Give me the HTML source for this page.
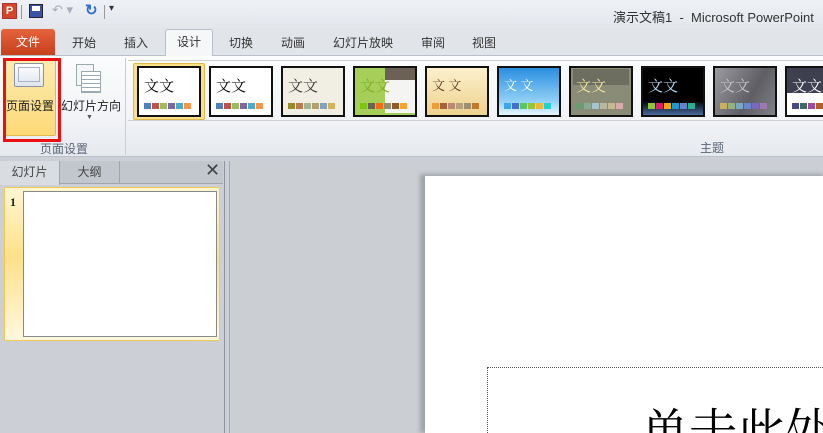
<!DOCTYPE html><html style="width:823px;height:433px;overflow:hidden"><head><meta charset="utf-8"><style>
*{margin:0;padding:0;box-sizing:border-box}
body{width:823px;height:433px;overflow:hidden;position:relative;background:#ccd0d6;font-family:"Liberation Sans","Noto Sans CJK SC",sans-serif;font-size:12px;color:#333}
.a{position:absolute}
.t{position:absolute;width:64px;height:51px;border:2px solid #111;overflow:hidden}
.t b{position:absolute;left:5px;top:7px;font-weight:normal;font-size:15px;font-family:"Noto Serif CJK SC",serif}
.sw{position:absolute;left:5px;top:35px;display:flex;gap:1px}
.sw i{display:block;width:7px;height:6px}
.tab{position:absolute;top:34px;font-size:12px;color:#333}
</style></head><body>
<div class="a" style="left:0;top:0;width:823px;height:28px;background:linear-gradient(#eef1f5,#e3e7ec)"></div>
<div class="a" style="left:2px;top:3px;width:15px;height:16px;background:#d24726;border:1px solid #a33;color:#fff;font-weight:bold;font-size:11px;text-align:center;line-height:14px">P</div>
<div class="a" style="left:21px;top:5px;width:1px;height:14px;background:#999"></div>
<div class="a" style="left:29px;top:4px;width:14px;height:14px;background:#3a52a6;border:1px solid #223"><div style="margin:1px 2px;height:5px;background:#fff"></div></div>
<div class="a" style="left:52px;top:2px;color:#aab;font-size:13px">↶ ▾</div>
<div class="a" style="left:85px;top:1px;color:#2e6fd0;font-size:15px;font-weight:bold">↻</div>
<div class="a" style="left:104px;top:5px;width:1px;height:14px;background:#999"></div>
<div class="a" style="left:109px;top:3px;font-size:10px">▾</div>
<div class="a" style="left:613px;top:7px;font-size:13px;color:#333;white-space:nowrap">演示文稿1&nbsp; - &nbsp;Microsoft PowerPoint</div>
<div class="a" style="left:0;top:28px;width:823px;height:28px;background:#e1e5ea;border-bottom:1px solid #b9c0c9"></div>
<div class="a" style="left:1px;top:29px;width:54px;height:26px;background:linear-gradient(#e5633c,#c7401c);border-radius:3px 3px 0 0;color:#fff;text-align:center;line-height:26px;font-size:12px">文件</div>
<div class="tab" style="left:72px">开始</div><div class="tab" style="left:124px">插入</div>
<div class="a" style="left:165px;top:29px;width:48px;height:28px;background:#f6f7f9;border:1px solid #b9c0c9;border-bottom:none;border-radius:3px 3px 0 0;text-align:center;line-height:25px">设计</div>
<div class="tab" style="left:229px">切换</div><div class="tab" style="left:281px">动画</div><div class="tab" style="left:333px">幻灯片放映</div><div class="tab" style="left:421px">审阅</div><div class="tab" style="left:472px">视图</div>
<div class="a" style="left:0;top:56px;width:823px;height:101px;background:linear-gradient(#fbfcfd,#f2f4f7 60%,#e6e9ee);border-bottom:1px solid #b9c0c9"></div>
<div class="a" style="left:125px;top:58px;width:1px;height:97px;background:#c9ced6"></div>
<div class="a" style="left:128px;top:60px;width:695px;height:1px;background:#d0d0d0"></div>
<div class="a" style="left:128px;top:120px;width:695px;height:1px;background:#d0d0d0"></div>
<div class="a" style="left:5px;top:60px;width:51px;height:76px;background:linear-gradient(#fdebb0,#fcd977);border:1px solid #e0b84c;border-radius:2px"></div>
<div class="a" style="left:14px;top:63px;width:30px;height:24px;border:1px solid #8a93a6;background:linear-gradient(#fff,#dfe4ee);border-radius:2px"><div style="margin:3px;height:15px;border:1px solid #aab3c4"></div></div>
<div class="a" style="left:6px;top:97px;font-size:12px;color:#222">页面设置</div>
<div class="a" style="left:3px;top:58px;width:58px;height:84px;border:3px solid #e81010"></div>
<div class="a" style="left:76px;top:64px;width:18px;height:22px;border:1px solid #9aa;background:#f4f6f8"></div>
<div class="a" style="left:81px;top:71px;width:20px;height:22px;border:1px solid #9aa;background:repeating-linear-gradient(#fff 0 3px,#9ab 3px 4px)"></div>
<div class="a" style="left:61px;top:97px;font-size:12px;color:#222">幻灯片方向</div>
<div class="a" style="left:86px;top:114px;font-size:7px;color:#555">▼</div>
<div class="a" style="left:40px;top:140px;color:#5a6576;font-size:12px">页面设置</div>
<div class="a" style="left:700px;top:139px;color:#5a6576;font-size:12px">主题</div>
<div class="a" style="left:133px;top:63px;width:72px;height:57px;background:#fbe08a;border:1px solid #e0b84c;border-radius:2px"></div>
<div class="t" style="left:137px;top:66px;background:#fff"><b style="color:#000">文文</b><div class="sw"><i style="background:#4f81bd"></i><i style="background:#c0504d"></i><i style="background:#9bbb59"></i><i style="background:#8064a2"></i><i style="background:#4bacc6"></i><i style="background:#f79646"></i></div></div>
<div class="t" style="left:209px;top:66px;background:#fff"><b style="color:#000">文文</b><div class="sw"><i style="background:#4f81bd"></i><i style="background:#c0504d"></i><i style="background:#9bbb59"></i><i style="background:#8064a2"></i><i style="background:#4bacc6"></i><i style="background:#f79646"></i></div></div>
<div class="t" style="left:281px;top:66px;background:#f1efe4"><b style="color:#333">文文</b><div class="sw"><i style="background:#958b28"></i><i style="background:#c0794d"></i><i style="background:#a3b395"></i><i style="background:#b5a06b"></i><i style="background:#7fa3c0"></i><i style="background:#d7b158"></i></div></div>
<div class="t" style="left:353px;top:66px;background:#a6cf5a"><div class="a" style="left:30px;top:0;width:30px;height:12px;background:#6b6155"></div><div class="a" style="left:30px;top:12px;width:30px;height:33px;background:#f4f4f2"></div><b style="color:#7bab22">文文</b><div class="sw"><i style="background:#7ac70f"></i><i style="background:#6b6155"></i><i style="background:#f26f10"></i><i style="background:#938f6d"></i><i style="background:#8d5b2e"></i><i style="background:#f6a330"></i></div></div>
<div class="t" style="left:425px;top:66px;background:linear-gradient(#fcf0cc,#eed28e)"><b style="color:#5a3a20;font-size:13px">文 文</b><div class="sw"><i style="background:#e8a035"></i><i style="background:#a4623a"></i><i style="background:#b98a74"></i><i style="background:#b8a078"></i><i style="background:#9c9070"></i><i style="background:#c0782a"></i></div></div>
<div class="t" style="left:497px;top:66px;background:linear-gradient(#2a8ee0,#8fd0f5 70%,#e8f6ff)"><b style="color:#fff;font-size:13px">文 文</b><div class="sw"><i style="background:#3aa6ec"></i><i style="background:#4470c8"></i><i style="background:#5bc466"></i><i style="background:#9bc23c"></i><i style="background:#f0b638"></i><i style="background:#20d2d8"></i></div></div>
<div class="t" style="left:569px;top:66px;background:#8a8c78"><div class="a" style="left:2px;top:1px;width:56px;height:16px;background:#6e6e60"></div><b style="color:#f3e8a0">文文</b><div class="sw"><i style="background:#6a9a70"></i><i style="background:#8aaa90"></i><i style="background:#a6c4d0"></i><i style="background:#b7b8a0"></i><i style="background:#c6b890"></i><i style="background:#d8aaa8"></i></div></div>
<div class="t" style="left:641px;top:66px;background:linear-gradient(#000 70%,#4a6aa0)"><b style="color:#bfe4ff">文文</b><div class="sw"><i style="background:#8ac83a"></i><i style="background:#d8206e"></i><i style="background:#f0a818"></i><i style="background:#1a9ad0"></i><i style="background:#6a82c8"></i><i style="background:#2ab090"></i></div></div>
<div class="t" style="left:713px;top:66px;background:linear-gradient(120deg,#9a9aa0,#5e5e64 60%,#808088)"><b style="color:#c8c8cc">文文</b><div class="sw"><i style="background:#c8b060"></i><i style="background:#98b080"></i><i style="background:#7aa8c0"></i><i style="background:#6a88c8"></i><i style="background:#7a68b8"></i><i style="background:#9a7ab0"></i></div></div>
<div class="t" style="left:785px;top:66px;background:#fff"><div class="a" style="left:0;top:0;width:64px;height:25px;background:#3e4050"></div><b style="color:#fff">文文</b><div class="sw"><i style="background:#4a4a80"></i><i style="background:#3a6a6a"></i><i style="background:#a04aa0"></i><i style="background:#b0602a"></i><i style="background:#8a5a3a"></i></div></div>
<div class="a" style="left:0;top:158px;width:225px;height:275px;background:#ccd0d6"></div>
<div class="a" style="left:0;top:161px;width:223px;height:23px;background:#c2c7ce;border-bottom:1px solid #9ea5ae"></div>
<div class="a" style="left:0;top:161px;width:60px;height:24px;background:#d9dde2;border-right:1px solid #9ea5ae;text-align:center;line-height:22px;color:#444">幻灯片</div>
<div class="a" style="left:60px;top:161px;width:60px;height:23px;border-right:1px solid #9ea5ae;text-align:center;line-height:22px;color:#444">大纲</div>
<div class="a" style="left:205px;top:160px;font-size:18px;color:#444">✕</div>
<div class="a" style="left:4px;top:187px;width:216px;height:154px;border:1px solid #f1c94f;border-radius:2px;background:linear-gradient(#fff6d2,#fde089 45%,#fff8df)"></div>
<div class="a" style="left:10px;top:195px;font-weight:bold;font-size:12px;color:#222;font-family:'Liberation Serif',serif">1</div>
<div class="a" style="left:23px;top:191px;width:194px;height:146px;background:#fff;border:1px solid #888"></div>
<div class="a" style="left:224px;top:161px;width:1px;height:272px;background:#8e959e"></div>
<div class="a" style="left:229px;top:161px;width:1px;height:272px;background:#a2a8b0"></div>
<div class="a" style="left:230px;top:161px;width:593px;height:272px;background:#cbced3"></div>
<div class="a" style="left:420px;top:174px;width:403px;height:259px;background:#9ea3aa;filter:blur(2px)"></div>
<div class="a" style="left:425px;top:176px;width:398px;height:257px;background:#fff"></div>
<div class="a" style="left:487px;top:367px;width:336px;height:66px;border:1px dotted #555;border-right:none;border-bottom:none"></div>
<div class="a" style="left:641px;top:402px;height:31px;overflow:hidden;width:182px"><div style="font-size:48px;color:#000;font-family:'Noto Serif CJK SC',serif;white-space:nowrap;line-height:60px;margin-top:-4px">单击此处</div></div>
</body></html>
